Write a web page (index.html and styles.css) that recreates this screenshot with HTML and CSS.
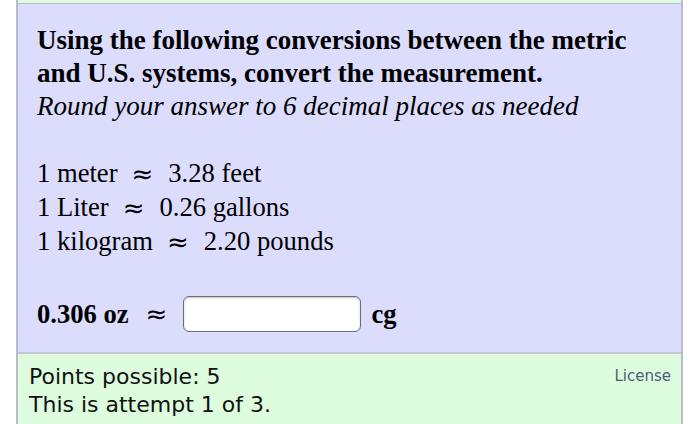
FILE: index.html
```html
<!DOCTYPE html>
<html lang="en">
<head>
    <meta charset="UTF-8">
    <title>Question</title>
    <link rel="stylesheet" href="styles.css">
</head>
<body>
    <div class="wrap">
        <div class="topstrip"></div>
        <div class="question">
            <p class="prompt">
                <strong>Using the following conversions between the metric and U.S. systems, convert the measurement.</strong><br>
                <em>Round your answer to 6 decimal places as needed</em>
            </p>

            <div class="conversions">
                <div class="row"><span>1 meter</span><span class="approx">&asymp;</span><span>3.28 feet</span></div>
                <div class="row"><span>1 Liter</span><span class="approx">&asymp;</span><span>0.26 gallons</span></div>
                <div class="row"><span>1 kilogram</span><span class="approx">&asymp;</span><span>2.20 pounds</span></div>
            </div>

            <div class="answer">
                <strong>0.306 oz</strong>
                <span class="approx">&asymp;</span>
                <input type="text" class="answer-box">
                <strong class="unit">cg</strong>
            </div>
        </div>
        <div class="footer">
            <div class="info">
                Points possible: 5<br>
                This is attempt 1 of 3.
            </div>
            <a class="license" href="#">License</a>
        </div>
    </div>
</body>
</html>
```

FILE: styles.css
```css
body {
    margin: 0;
    background-color: #fff;
}
.wrap {
    margin-left: 16px;
    width: 667px;
    border-left: 2px solid #babad2;
    border-right: 2px solid #babad2;
    box-sizing: border-box;
}
.topstrip {
    height: 3px;
    background-color: #ddfcdd;
    border-bottom: 1px solid #b8bccc;
}
.question {
    background-color: #dcdcfc;
    padding: 20px 18px 20px 19px;
    height: 348px;
    box-sizing: border-box;
    font-family: "Liberation Serif", "Times New Roman", serif;
    font-size: 27px;
    color: #000;
}
.prompt {
    margin: 0;
    line-height: 33px;
}
.conversions {
    margin-top: 33px;
    line-height: 34px;
    font-size: 26.6px;
}
.approx {
    font-family: "DejaVu Sans", sans-serif;
    font-size: 26px;
    line-height: 0;
    font-weight: normal;
    vertical-align: -1px;
}
.row .approx {
    margin: 0 15px 0 14px;
}
.answer {
    display: flex;
    align-items: center;
    margin-top: 38px;
    font-size: 26.6px;
}
.answer .approx {
    margin: 0 16px 0 17px;
}
.answer-box {
    width: 178px;
    height: 36px;
    box-sizing: border-box;
    border: 1px solid #6e6e6e;
    border-radius: 6px;
    background-color: #fff;
    box-shadow: inset 0 1px 2px rgba(0,0,0,0.25);
    margin: 0;
}
.unit {
    margin-left: 10px;
}
.footer {
    background-color: #ddfcdd;
    border-top: 2px solid #c4c8d4;
    padding: 9px 10px 0 11px;
    height: 72px;
    box-sizing: border-box;
    display: flex;
    justify-content: space-between;
    font-family: "DejaVu Sans", Verdana, sans-serif;
}
.info {
    font-size: 22px;
    line-height: 28px;
    color: #111;
}
.license {
    font-size: 15px;
    color: #4e5b7c;
    text-decoration: none;
    margin-top: 4px;
}
```
